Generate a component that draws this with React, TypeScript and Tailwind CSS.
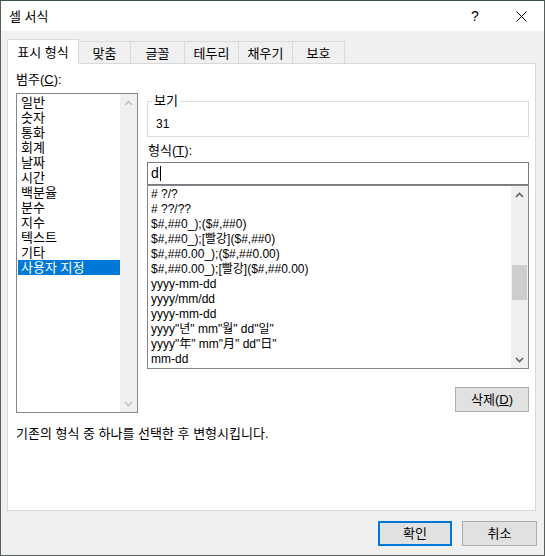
import React from 'react';

const categories = ['일반', '숫자', '통화', '회계', '날짜', '시간', '백분율', '분수', '지수', '텍스트', '기타', '사용자 지정'];

const formats = [
  '# ?/?',
  '# ??/??',
  '$#,##0_);($#,##0)',
  '$#,##0_);[빨강]($#,##0)',
  '$#,##0.00_);($#,##0.00)',
  '$#,##0.00_);[빨강]($#,##0.00)',
  'yyyy-mm-dd',
  'yyyy/mm/dd',
  'yyyy-mm-dd',
  'yyyy"년" mm"월" dd"일"',
  'yyyy"年" mm"月" dd"日"',
  'mm-dd',
];

const tabs = [
  { name: '표시 형식', w: 'w-[72px]' },
  { name: '맞춤', w: 'w-[53px]' },
  { name: '글꼴', w: 'w-[55px]' },
  { name: '테두리', w: 'w-[55px]' },
  { name: '채우기', w: 'w-[55px]' },
  { name: '보호', w: 'w-[53px]' },
];

const Chevron: React.FC<{ up?: boolean; color: string }> = ({ up, color }) => (
  <svg width="9" height="6" viewBox="0 0 9 6" fill="none">
    <path
      d={up ? 'M1 5 L4.5 1.5 L8 5' : 'M1 1 L4.5 4.5 L8 1'}
      stroke={color}
      strokeWidth="1.6"
    />
  </svg>
);

const App: React.FC = () => {
  return (
    <div className="w-[545px] h-[556px] flex flex-col border border-[#56605a] border-t-[#3d5444] bg-[#f0f0f0] text-[13px] leading-[15px] text-black font-['Liberation_Sans','Noto_Sans_CJK_KR',sans-serif]">
      {/* Title bar */}
      <div className="h-[30px] flex items-center bg-white shrink-0">
        <span className="pl-[8px] flex-1">셀 서식</span>
        <div className="w-[46px] h-full flex items-center justify-center text-[14px]">?</div>
        <div className="w-[46px] h-full flex items-center justify-center">
          <svg width="11" height="11" viewBox="0 0 11 11">
            <path d="M0.5 0.5 L10.5 10.5 M10.5 0.5 L0.5 10.5" stroke="#000" strokeWidth="1" />
          </svg>
        </div>
      </div>

      {/* Body */}
      <div className="flex-1 flex flex-col pl-[6px] pt-[8px]">
        {/* Tabs */}
        <div className="flex items-end h-[24px]">
          {tabs.map((tab, i) =>
            i === 0 ? (
              <div
                key={tab.name}
                className={`${tab.w} h-[25px] -mb-px relative z-10 flex items-center justify-center bg-white border border-b-0 border-[#d9d9d9]`}
              >
                {tab.name}
              </div>
            ) : (
              <div
                key={tab.name}
                className={`${tab.w} h-[22px] -ml-px flex items-center justify-center border border-b-0 border-[#d9d9d9] pt-[1px]`}
              >
                {tab.name}
              </div>
            )
          )}
        </div>

        {/* Panel */}
        <div className="w-[529px] h-[448px] bg-white border border-[#d9d9d9] pt-[8px] pl-[8px]">
          <div className="flex items-start">
            {/* Category column */}
            <div className="flex flex-col">
              <span>
                범주(<u>C</u>):
              </span>
              <div className="mt-[6px] w-[122px] h-[320px] flex border border-[#828790]">
                <div className="flex-1 pt-[1px] pl-px">
                  {categories.map((c, i) => (
                    <div
                      key={c}
                      className={`h-[15px] pl-[3px] whitespace-nowrap ${i === categories.length - 1 ? 'bg-[#0078d7] text-white' : ''}`}
                    >
                      {c}
                    </div>
                  ))}
                </div>
                <div className="w-[17px] bg-[#f0f0f0] flex flex-col justify-between">
                  <div className="h-[17px] flex items-center justify-center">
                    <Chevron up color="#c2c2c2" />
                  </div>
                  <div className="h-[17px] flex items-center justify-center">
                    <Chevron color="#c2c2c2" />
                  </div>
                </div>
              </div>
            </div>

            {/* Format column */}
            <div className="ml-[9px] w-[382px] flex flex-col">
              {/* 보기 group */}
              <div className="relative mt-[29px] h-[36px] border border-[#dcdcdc] pl-[8px] pt-[14px]">
                <span className="absolute -top-[9px] left-[4px] bg-white px-[2px]">보기</span>
                <span className="text-[12px]">31</span>
              </div>

              <span className="mt-[6px] pl-px">
                형식(<u>T</u>):
              </span>

              <div className="mt-[4px] h-[23px] border border-[#7a7a7a] flex items-center pl-[3px]">
                <span className="text-[14px]">d</span>
                <span className="inline-block w-px h-[15px] bg-black ml-px" />
              </div>

              <div className="h-[184px] border border-[#828790] flex text-[12px]">
                <div className="flex-1 pt-px pl-[3px]">
                  {formats.map((f, i) => (
                    <div key={i} className="h-[15px] whitespace-nowrap">
                      {f}
                    </div>
                  ))}
                </div>
                <div className="w-[17px] bg-[#f0f0f0] flex flex-col">
                  <div className="h-[17px] flex items-center justify-center">
                    <Chevron up color="#606060" />
                  </div>
                  <div className="flex-1">
                    <div className="mt-[62px] mx-px h-[35px] bg-[#cdcdcd]" />
                  </div>
                  <div className="h-[17px] flex items-center justify-center">
                    <Chevron color="#606060" />
                  </div>
                </div>
              </div>

              <div className="flex justify-end mt-[18px]">
                <button className="w-[74px] h-[25px] bg-[#e1e1e1] border border-[#adadad] flex items-center justify-center">
                  삭제(<u>D</u>)
                </button>
              </div>
            </div>
          </div>

          <p className="mt-[13px]">기존의 형식 중 하나를 선택한 후 변형시킵니다.</p>
        </div>

        {/* Bottom buttons */}
        <div className="flex justify-end gap-[10px] mt-[10px] pr-[7px]">
          <button className="w-[74px] h-[25px] bg-[#e1e1e1] border-2 border-[#0078d7] flex items-center justify-center">
            확인
          </button>
          <button className="w-[75px] h-[25px] bg-[#e1e1e1] border border-[#adadad] flex items-center justify-center">
            취소
          </button>
        </div>
      </div>
    </div>
  );
};

export default App;
